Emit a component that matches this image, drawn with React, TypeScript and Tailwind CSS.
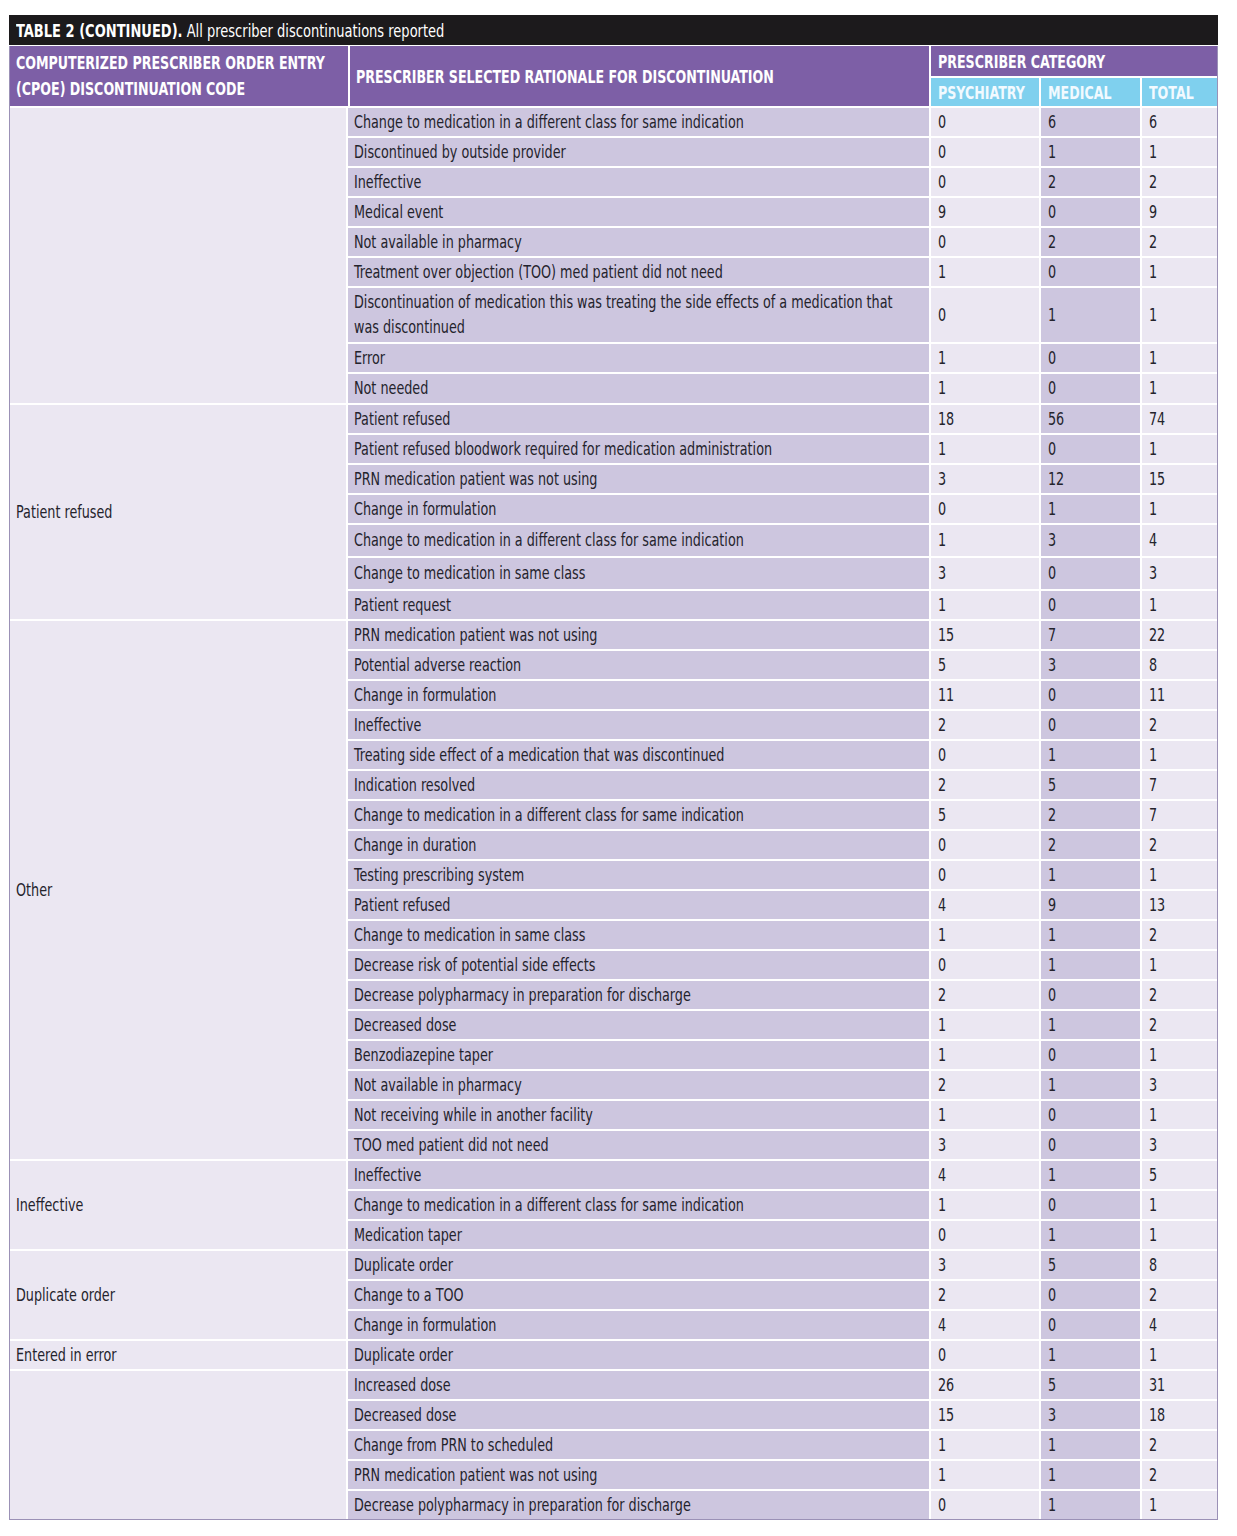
import React from "react";

type Row = { t: React.ReactNode; p: string; m: string; s: string; h?: string };
type Group = { label: string; rows: Row[] };

const r = (t: React.ReactNode, p: string, m: string, s: string, h?: string): Row => ({ t, p, m, s, h });

const groups: Group[] = [
  {
    label: "",
    rows: [
      r("Change to medication in a different class for same indication", "0", "6", "6"),
      r("Discontinued by outside provider", "0", "1", "1"),
      r("Ineffective", "0", "2", "2"),
      r("Medical event", "9", "0", "9"),
      r("Not available in pharmacy", "0", "2", "2"),
      r("Treatment over objection (TOO) med patient did not need", "1", "0", "1"),
      r(
        <>
          Discontinuation of medication this was treating the side effects of a medication that
          <br />
          was discontinued
        </>,
        "0",
        "1",
        "1",
        "h-[54px]"
      ),
      r("Error", "1", "0", "1"),
      r("Not needed", "1", "0", "1", "h-[29px]"),
    ],
  },
  {
    label: "Patient refused",
    rows: [
      r("Patient refused", "18", "56", "74"),
      r("Patient refused bloodwork required for medication administration", "1", "0", "1"),
      r("PRN medication patient was not using", "3", "12", "15"),
      r("Change in formulation", "0", "1", "1"),
      r("Change to medication in a different class for same indication", "1", "3", "4", "h-[31px]"),
      r("Change to medication in same class", "3", "0", "3", "h-[31px]"),
      r("Patient request", "1", "0", "1"),
    ],
  },
  {
    label: "Other",
    rows: [
      r("PRN medication patient was not using", "15", "7", "22"),
      r("Potential adverse reaction", "5", "3", "8"),
      r("Change in formulation", "11", "0", "11"),
      r("Ineffective", "2", "0", "2"),
      r("Treating side effect of a medication that was discontinued", "0", "1", "1"),
      r("Indication resolved", "2", "5", "7"),
      r("Change to medication in a different class for same indication", "5", "2", "7"),
      r("Change in duration", "0", "2", "2"),
      r("Testing prescribing system", "0", "1", "1"),
      r("Patient refused", "4", "9", "13"),
      r("Change to medication in same class", "1", "1", "2"),
      r("Decrease risk of potential side effects", "0", "1", "1"),
      r("Decrease polypharmacy in preparation for discharge", "2", "0", "2"),
      r("Decreased dose", "1", "1", "2"),
      r("Benzodiazepine taper", "1", "0", "1"),
      r("Not available in pharmacy", "2", "1", "3"),
      r("Not receiving while in another facility", "1", "0", "1"),
      r("TOO med patient did not need", "3", "0", "3"),
    ],
  },
  {
    label: "Ineffective",
    rows: [
      r("Ineffective", "4", "1", "5"),
      r("Change to medication in a different class for same indication", "1", "0", "1"),
      r("Medication taper", "0", "1", "1"),
    ],
  },
  {
    label: "Duplicate order",
    rows: [
      r("Duplicate order", "3", "5", "8"),
      r("Change to a TOO", "2", "0", "2"),
      r("Change in formulation", "4", "0", "4"),
    ],
  },
  {
    label: "Entered in error",
    rows: [r("Duplicate order", "0", "1", "1")],
  },
  {
    label: "",
    rows: [
      r("Increased dose", "26", "5", "31"),
      r("Decreased dose", "15", "3", "18"),
      r("Change from PRN to scheduled", "1", "1", "2"),
      r("PRN medication patient was not using", "1", "1", "2"),
      r("Decrease polypharmacy in preparation for discharge", "0", "1", "1"),
    ],
  },
];

function T({ children }: { children: React.ReactNode }) {
  return (
    <span className="inline-block origin-left scale-x-[0.835] whitespace-nowrap">{children}</span>
  );
}

function H({ children }: { children: React.ReactNode }) {
  return (
    <span className="inline-block origin-left scale-x-[0.78] whitespace-nowrap">{children}</span>
  );
}

const cellText = "flex items-center text-[17px] leading-[25px] text-[#24232c]";

export default function App() {
  return (
    <div className="bg-white min-h-[1536px] pt-[15px] pl-[9px] font-['DejaVu_Sans_Condensed',_'DejaVu_Sans',_sans-serif]">
      <div className="w-[1209px]">
        <div className="bg-[#1c1a1c] h-[30px] flex items-center pl-[7px] text-white text-[18px]">
          <span className="inline-block origin-left scale-x-[0.805] whitespace-nowrap">
            <span className="font-bold">TABLE 2 (CONTINUED).</span> All prescriber discontinuations reported
          </span>
        </div>
        <div className="mt-[1px] bg-white border-x border-b border-[#9b91b6] flex flex-col gap-[2px]">
          {/* header */}
          <div className="flex gap-[2px] h-[60px]">
            <div className="w-[338px] bg-[#7d5fa6] text-white font-bold text-[18px] leading-[26px] pl-[6px] flex items-center">
              <H>
                COMPUTERIZED PRESCRIBER ORDER ENTRY
                <br />
                (CPOE) DISCONTINUATION CODE
              </H>
            </div>
            <div className="w-[581px] bg-[#7d5fa6] text-white font-bold text-[18px] pl-[6px] flex items-center">
              <H>PRESCRIBER SELECTED RATIONALE FOR DISCONTINUATION</H>
            </div>
            <div className="flex-1 flex flex-col gap-[2px]">
              <div className="h-[30px] bg-[#7d5fa6] text-white font-bold text-[18px] pl-[7px] flex items-center">
                <H>PRESCRIBER CATEGORY</H>
              </div>
              <div className="flex-1 grid grid-cols-[108px_99px_75px] gap-[2px]">
                <div className="bg-[#7fd0ee] text-[#f2faff] font-bold text-[18px] pl-[7px] flex items-center">
                  <H>PSYCHIATRY</H>
                </div>
                <div className="bg-[#7fd0ee] text-[#f2faff] font-bold text-[18px] pl-[7px] flex items-center">
                  <H>MEDICAL</H>
                </div>
                <div className="bg-[#7fd0ee] text-[#f2faff] font-bold text-[18px] pl-[7px] flex items-center">
                  <H>TOTAL</H>
                </div>
              </div>
            </div>
          </div>
          {/* body */}
          {groups.map((g, gi) => (
            <div key={gi} className="flex gap-[2px]">
              <div className={`w-[338px] bg-[#ebe7f2] pl-[6px] ${cellText}`}>
                <T>{g.label}</T>
              </div>
              <div className="flex-1 flex flex-col gap-[2px]">
                {g.rows.map((row, ri) => (
                  <div
                    key={ri}
                    className={`grid grid-cols-[581px_108px_99px_75px] gap-[2px] ${row.h ?? "h-[28px]"}`}
                  >
                    <div className={`bg-[#cdc6df] pl-[6px] ${cellText}`}>
                      <T>{row.t}</T>
                    </div>
                    <div className={`bg-[#ebe7f2] pl-[7px] ${cellText}`}>
                      <T>{row.p}</T>
                    </div>
                    <div className={`bg-[#cdc6df] pl-[7px] ${cellText}`}>
                      <T>{row.m}</T>
                    </div>
                    <div className={`bg-[#ebe7f2] pl-[7px] ${cellText}`}>
                      <T>{row.s}</T>
                    </div>
                  </div>
                ))}
              </div>
            </div>
          ))}
        </div>
      </div>
    </div>
  );
}
